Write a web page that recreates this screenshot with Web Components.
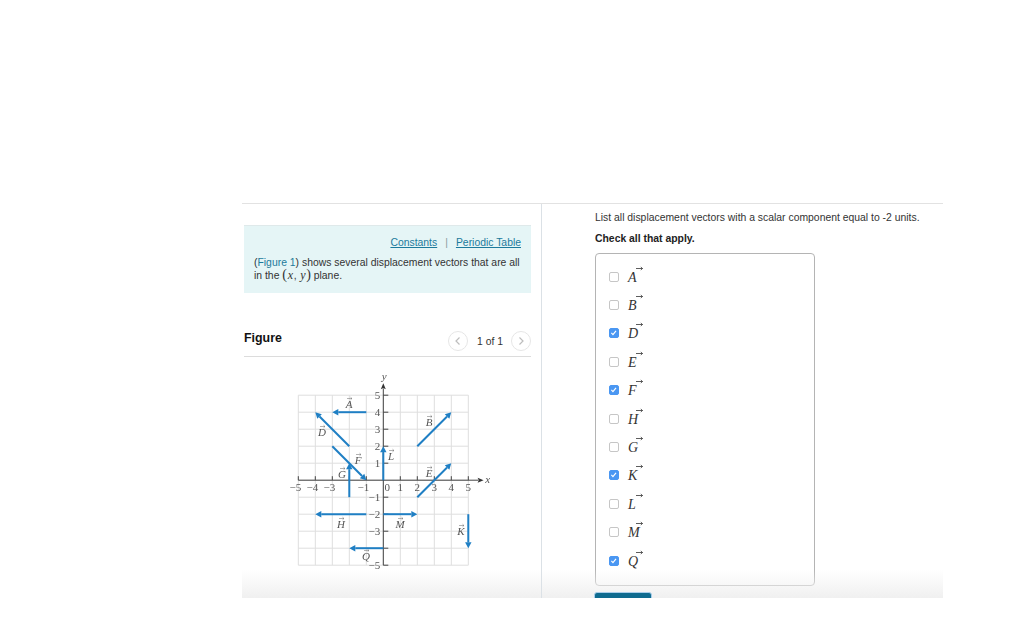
<!DOCTYPE html>
<html>
<head>
<meta charset="utf-8">
<style>
  html, body { margin: 0; background: #fff; }
  body { font-family: "Liberation Sans", Arial, sans-serif; color: #333; }
</style>
</head>
<body>
<problem-page>
  <info-box slot="left"></info-box>
  <figure-header slot="left"></figure-header>
  <vector-figure slot="left"></vector-figure>
  <question-text slot="right"></question-text>
  <choice-list slot="right">
    <vector-choice letter="A"></vector-choice>
    <vector-choice letter="B"></vector-choice>
    <vector-choice letter="D" checked></vector-choice>
    <vector-choice letter="E"></vector-choice>
    <vector-choice letter="F" checked></vector-choice>
    <vector-choice letter="H"></vector-choice>
    <vector-choice letter="G"></vector-choice>
    <vector-choice letter="K" checked></vector-choice>
    <vector-choice letter="L"></vector-choice>
    <vector-choice letter="M"></vector-choice>
    <vector-choice letter="Q" checked></vector-choice>
  </choice-list>
  <submit-bar slot="right"></submit-bar>
</problem-page>

<script>
// ProblemPage: the two column frame
class ProblemPage extends HTMLElement {
  constructor() {
    super();
    this.attachShadow({mode: 'open'}).innerHTML = `
      <style>
        :host { display: block; padding: 203px 0 0 242px; }
        .frame {
          position: relative;
          display: flex;
          width: 701px;
          height: 394px;
          border-top: 1px solid #e2e2e2;
          overflow: hidden;
        }
        .left {
          position: relative;
          z-index: 2;
          width: 300px;
          box-sizing: border-box;
          padding: 21px 10px 0 2px;
          border-right: 1px solid #dbe1e6;
        }
        .right {
          flex: 1;
          padding: 7px 0 0 53px;
        }
        .fade {
          position: absolute;
          z-index: 1;
          left: 0;
          right: 0;
          bottom: 0;
          height: 28px;
          background: linear-gradient(rgba(240,240,240,0), rgba(240,240,240,1));
          pointer-events: none;
        }
      </style>
      <div class="frame">
        <div class="left"><slot name="left"></slot></div>
        <div class="right"><slot name="right"></slot></div>
        <div class="fade"></div>
      </div>`;
  }
}
customElements.define('problem-page', ProblemPage);

// InfoBox: teal intro with the links
class InfoBox extends HTMLElement {
  constructor() {
    super();
    this.attachShadow({mode: 'open'}).innerHTML = `
      <style>
        :host {
          display: block;
          height: 68px;
          box-sizing: border-box;
          padding: 10px 10px 0 10px;
          background: #e5f5f6;
          border-top: 1px solid #dfe9ea;
          font-size: 10.4px;
          color: #333;
        }
        .links { text-align: right; line-height: 13px; color: #8a9a9e; }
        a { color: #1c7a9c; text-decoration: underline; }
        .sep { margin: 0 8px; }
        p { margin: 7px 0 0 0; line-height: 13px; }
        .fig { color: #1c7a9c; }
        .paren { font-family: "Liberation Serif", serif; font-size: 14px; line-height: 10px; }
        i { font-family: "Liberation Serif", serif; font-size: 12px; margin: 0 .7px; }
      </style>
      <div class="links"><a>Constants</a><span class="sep">|</span><a>Periodic Table</a></div>
      <p>(<span class="fig">Figure 1</span>) shows several displacement vectors that are all<br>in the <span class="paren">(</span><i>x</i>, <i>y</i><span class="paren">)</span> plane.</p>`;
  }
}
customElements.define('info-box', InfoBox);

// FigureHeader: title and pager
class FigureHeader extends HTMLElement {
  constructor() {
    super();
    this.attachShadow({mode: 'open'}).innerHTML = `
      <style>
        :host {
          display: flex;
          align-items: center;
          height: 34px;
          margin-top: 30px;
          border-bottom: 1px solid #dcdcdc;
          box-sizing: border-box;
          padding-bottom: 1px;
        }
        .title { flex: 1; font-size: 12.4px; font-weight: bold; color: #111; margin-top: -3px; }
        .count { font-size: 10.4px; color: #333; margin: 5px 8px 0 9px; }
        .nav { width: 20px; height: 20px; display: block; margin-top: 3px; }
      </style>
      <div class="title">Figure</div>
      <svg class="nav" viewBox="0 0 20 20"><circle cx="10" cy="10" r="9.5" fill="#fff" stroke="#e6e6e6"/><path d="M11.5 6.5 8 10l3.5 3.5" fill="none" stroke="#bdbdbd" stroke-width="1.2"/></svg>
      <div class="count">1 of 1</div>
      <svg class="nav" viewBox="0 0 20 20"><circle cx="10" cy="10" r="9.5" fill="#fff" stroke="#e6e6e6"/><path d="M8.5 6.5 12 10l-3.5 3.5" fill="none" stroke="#bdbdbd" stroke-width="1.2"/></svg>`;
  }
}
customElements.define('figure-header', FigureHeader);

// VectorFigure: the graph, drawn in svg from the vector list
const U = 17, OX = 103.3, OY = 115.2;
const px = x => OX + x * U;
const py = y => OY - y * U;
const VECTORS = [
  [-1, 4, -3, 4], [2, 2, 4, 4], [-2, 2, -4, 4], [2, -1, 4, 1], [-3, 2, -1, 0],
  [-2, -1, -2, 1], [-1, -2, -4, -2], [5, -2, 5, -4], [0, 0, 0, 2], [0, -2, 2, -2], [0, -4, -2, -4]
];
const LABELS = [
  ['A', 69, 39], ['B', 149, 57], ['D', 42, 67], ['E', 149, 108], ['F', 78, 95], ['G', 62, 109],
  ['H', 61, 159], ['K', 181, 166], ['L', 111, 91], ['M', 120, 159], ['Q', 86, 191]
];

function figureSvg() {
  let s = '';
  for (let i = -5; i <= 5; i++) {
    s += `<line x1="${px(i)}" y1="${py(5)}" x2="${px(i)}" y2="${py(-5)}" stroke="#dedede" stroke-width="1"/>`;
    s += `<line x1="${px(-5)}" y1="${py(i)}" x2="${px(5)}" y2="${py(i)}" stroke="#dedede" stroke-width="1"/>`;
  }
  s += `<line x1="${px(-5)}" y1="${OY}" x2="${px(5.6)}" y2="${OY}" stroke="#444" stroke-width="1"/>`;
  s += `<line x1="${OX}" y1="${py(-5)}" x2="${OX}" y2="${py(5.4)}" stroke="#444" stroke-width="1"/>`;
  s += `<path d="M${px(5.9)} ${OY} l-6 -2.5 1.2 2.5 -1.2 2.5z" fill="#333"/>`;
  s += `<path d="M${OX} ${py(5.7)} l-2.5 6 2.5 -1.2 2.5 1.2z" fill="#333"/>`;
  for (let i = -5; i <= 5; i++) {
    if (i === 0) continue;
    s += `<line x1="${px(i)}" y1="${OY}" x2="${px(i)}" y2="${OY - 4}" stroke="#444" stroke-width="1"/>`;
    s += `<line x1="${OX}" y1="${py(i)}" x2="${OX + 5}" y2="${py(i)}" stroke="#444" stroke-width="1"/>`;
    const name = (i < 0 ? '\u2212' : '') + Math.abs(i);
    // the -2 on x and the -4 on y are left out, arrows run over them
    if (i !== -2) s += `<text x="${px(i) + (i < 0 ? -3 : 0)}" y="${OY + 11}" text-anchor="middle" class="n">${name}</text>`;
    if (i !== -4) s += `<text x="${OX - 3}" y="${py(i) + 3.5}" text-anchor="end" class="n">${name}</text>`;
  }
  s += `<text x="${OX + 4}" y="${OY + 11}" text-anchor="middle" class="n">0</text>`;
  s += `<text x="${px(6)}" y="${OY + 3}" class="v">x</text>`;
  s += `<text x="${OX + 1}" y="15" text-anchor="middle" class="v">y</text>`;
  VECTORS.forEach(([x1, y1, x2, y2]) => {
    const ax = px(x1), ay = py(y1), bx = px(x2), by = py(y2);
    const len = Math.hypot(bx - ax, by - ay);
    const ux = (bx - ax) / len, uy = (by - ay) / len;
    const hx = bx - ux * 6, hy = by - uy * 6;
    s += `<line x1="${ax}" y1="${ay}" x2="${hx}" y2="${hy}" stroke="#1f7fc4" stroke-width="2"/>`;
    s += `<path d="M${bx} ${by} L${hx - uy * 3.2} ${hy + ux * 3.2} L${hx + uy * 3.2} ${hy - ux * 3.2}z" fill="#1f7fc4"/>`;
  });
  LABELS.forEach(([t, x, y]) => {
    s += `<text x="${x}" y="${y + 4}" text-anchor="middle" class="v">${t}</text>`;
    s += `<path d="M${x - 2} ${y - 5.5}h5m-1.5 -1.3l1.5 1.3 -1.5 1.3" fill="none" stroke="#666" stroke-width=".5"/>`;
  });
  return s;
}

class VectorFigure extends HTMLElement {
  constructor() {
    super();
    this.attachShadow({mode: 'open'}).innerHTML = `
      <style>
        :host { display: block; margin: 8px 0 0 36px; width: 220px; height: 210px; }
        svg { display: block; filter: blur(.3px); }
        text { font-family: "Liberation Serif", serif; fill: #555; }
        .n { font-size: 11px; }
        .v { font-size: 11px; font-style: italic; }
      </style>
      <svg width="220" height="210" viewBox="0 0 220 210">${figureSvg()}</svg>`;
  }
}
customElements.define('vector-figure', VectorFigure);

// QuestionText: prompt above the choices
class QuestionText extends HTMLElement {
  constructor() {
    super();
    this.attachShadow({mode: 'open'}).innerHTML = `
      <style>
        :host { display: block; font-size: 10.4px; color: #333; }
        p { margin: 0; line-height: 13px; }
        b { display: block; margin-top: 8px; line-height: 13px; color: #222; }
      </style>
      <p>List all displacement vectors with a scalar component equal to -2 units.</p>
      <b>Check all that apply.</b>`;
  }
}
customElements.define('question-text', QuestionText);

// ChoiceList: rounded box holding the options
class ChoiceList extends HTMLElement {
  constructor() {
    super();
    this.attachShadow({mode: 'open'}).innerHTML = `
      <style>
        :host {
          display: block;
          width: 220px;
          height: 333px;
          margin-top: 8px;
          box-sizing: border-box;
          padding: 9px 0 0 13px;
          border: 1px solid #b4b4b4;
          border-radius: 4px;
          background: #fff;
        }
      </style>
      <slot></slot>`;
  }
}
customElements.define('choice-list', ChoiceList);

// VectorChoice: checkbox and a letter with an arrow on it
class VectorChoice extends HTMLElement {
  constructor() {
    super();
    this.attachShadow({mode: 'open'}).innerHTML = `
      <style>
        :host {
          display: flex;
          align-items: center;
          height: 28.4px;
        }
        .box {
          width: 10px;
          height: 10px;
          margin-top: -1px;
          box-sizing: border-box;
          border: 1.3px solid #c6c6c6;
          border-radius: 2px;
          background: #fff;
        }
        .box svg { display: none; }
        :host([checked]) .box { background: #4a97f2; border-color: #4a97f2; }
        :host([checked]) .box svg { display: block; width: 7.4px; height: 7.4px; }
        .math { position: relative; margin-left: 9px; line-height: 14px; }
        i { font-family: "Liberation Serif", serif; font-size: 14px; color: #333; }
        .arrow { position: absolute; left: 8px; top: -4px; width: 7px; height: 5px; }
      </style>
      <div class="box"><svg viewBox="0 0 8 8"><path d="M1.5 4.2 3.2 6 6.5 2" fill="none" stroke="#fff" stroke-width="1.3"/></svg></div>
      <span class="math"><i></i><svg class="arrow" viewBox="0 0 7 5"><path d="M0 2.5h6.5M4.8 1l1.7 1.5L4.8 4" fill="none" stroke="#333" stroke-width=".8"/></svg></span>`;
  }
  connectedCallback() {
    this.shadowRoot.querySelector('i').textContent = this.getAttribute('letter');
  }
}
customElements.define('vector-choice', VectorChoice);

// SubmitBar: the button, cut off by the bottom of the frame
class SubmitBar extends HTMLElement {
  constructor() {
    super();
    this.attachShadow({mode: 'open'}).innerHTML = `
      <style>
        :host { display: block; position: relative; z-index: 2; margin: 6px 0 0 -1px; }
        .btn {
          width: 58px;
          height: 24px;
          box-sizing: border-box;
          background: #0f6b8f;
          border: 1px solid #a9cdea;
          border-radius: 3px;
        }
      </style>
      <div class="btn"></div>`;
  }
}
customElements.define('submit-bar', SubmitBar);
</script>
</body>
</html>
